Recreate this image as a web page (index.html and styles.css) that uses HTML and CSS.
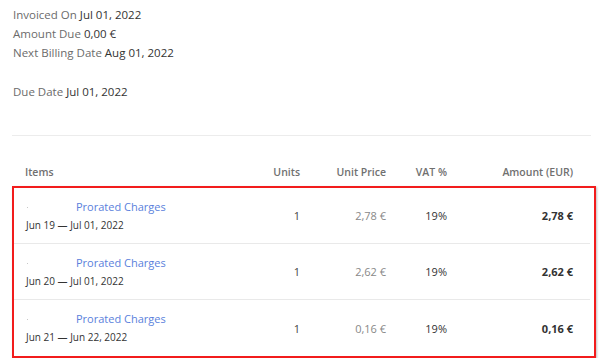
FILE: index.html
```html
<!DOCTYPE html>
<html>
<head>
<meta charset="utf-8">
<link rel="stylesheet" href="styles.css">
</head>
<body>
<div class="page">
  <div class="meta">
    <div class="line"><span class="lbl">Invoiced On</span> <span class="val">Jul 01, 2022</span></div>
    <div class="line"><span class="lbl">Amount Due</span> <span class="val">0,00 €</span></div>
    <div class="line"><span class="lbl">Next Billing Date</span> <span class="val">Aug 01, 2022</span></div>
    <div class="line due"><span class="lbl">Due Date</span> <span class="val">Jul 01, 2022</span></div>
  </div>
  <hr class="divider">
  <div class="table">
    <div class="row head">
      <div class="c-item">Items</div>
      <div class="c-num">Units</div>
      <div class="c-num">Unit Price</div>
      <div class="c-num">VAT %</div>
      <div class="c-num">Amount (EUR)</div>
    </div>
    <div class="body">
      <div class="row item">
        <div class="c-item">
          <div class="name"><span class="dot"></span><a class="link">Prorated Charges</a></div>
          <div class="period">Jun 19 — Jul 01, 2022</div>
        </div>
        <div class="c-num units">1</div>
        <div class="c-num price">2,78 €</div>
        <div class="c-num vat">19%</div>
        <div class="c-num amount">2,78 €</div>
      </div>
      <div class="row item">
        <div class="c-item">
          <div class="name"><span class="dot"></span><a class="link">Prorated Charges</a></div>
          <div class="period">Jun 20 — Jul 01, 2022</div>
        </div>
        <div class="c-num units">1</div>
        <div class="c-num price">2,62 €</div>
        <div class="c-num vat">19%</div>
        <div class="c-num amount">2,62 €</div>
      </div>
      <div class="row item">
        <div class="c-item">
          <div class="name"><span class="dot"></span><a class="link">Prorated Charges</a></div>
          <div class="period">Jun 21 — Jun 22, 2022</div>
        </div>
        <div class="c-num units">1</div>
        <div class="c-num price">0,16 €</div>
        <div class="c-num vat">19%</div>
        <div class="c-num amount">0,16 €</div>
      </div>
    </div>
  </div>
</div>
</body>
</html>
```
FILE: styles.css
```css
html, body {
  margin: 0;
  padding: 0;
  background: #ffffff;
}
body {
  font-family: "Open Sans", "Noto Sans", "Liberation Sans", sans-serif;
  font-size: 11.5px;
  color: #333333;
}
.page {
  padding: 5px 10px 0 12px;
}
.meta {
  padding-left: 1px;
}
.line {
  line-height: 19px;
  height: 19px;
}
.line.due {
  margin-top: 20px;
}
.lbl {
  color: #6b6b6b;
}
.val {
  color: #333333;
}
.divider {
  border: 0;
  border-top: 1px solid #ececec;
  margin: 34px 5px 0 0;
  height: 0;
}
.row {
  display: grid;
  grid-template-columns: 1fr 60px 86px 61px 126px;
  padding: 0 23px 0 13px;
  align-items: center;
}
.head {
  height: 50px;
  box-sizing: border-box;
  align-items: end;
  padding-bottom: 7px;
  font-size: 10.5px;
  color: #707070;
  font-weight: 600;
  line-height: 14px;
}
.c-num {
  text-align: right;
}
.body {
  border: 2px solid #f21c1c;
  box-shadow: 1px 1px 2px rgba(0, 0, 0, 0.25);
}
.item {
  height: 55px;
  padding-left: 12px;
  padding-right: 17px;
  border-bottom: 1px solid #e9e9e9;
  margin: 0 4px 0 0;
  font-size: 11px;
}
.item:last-child {
  border-bottom: 0;
  height: 56px;
}
.name {
  display: flex;
  align-items: center;
  height: 19px;
}
.dot {
  width: 1px;
  height: 1px;
  background: #c8c8c8;
  margin: 2px 0 0 1px;
}
.link {
  margin-left: 48px;
  color: #5a7fdc;
  font-size: 11px;
  cursor: pointer;
}
.period {
  font-size: 10px;
  color: #333333;
  line-height: 19px;
  height: 19px;
}
.units {
  color: #444444;
}
.price {
  color: #888888;
}
.vat {
  color: #333333;
}
.amount {
  font-weight: 700;
  color: #333333;
}
```
